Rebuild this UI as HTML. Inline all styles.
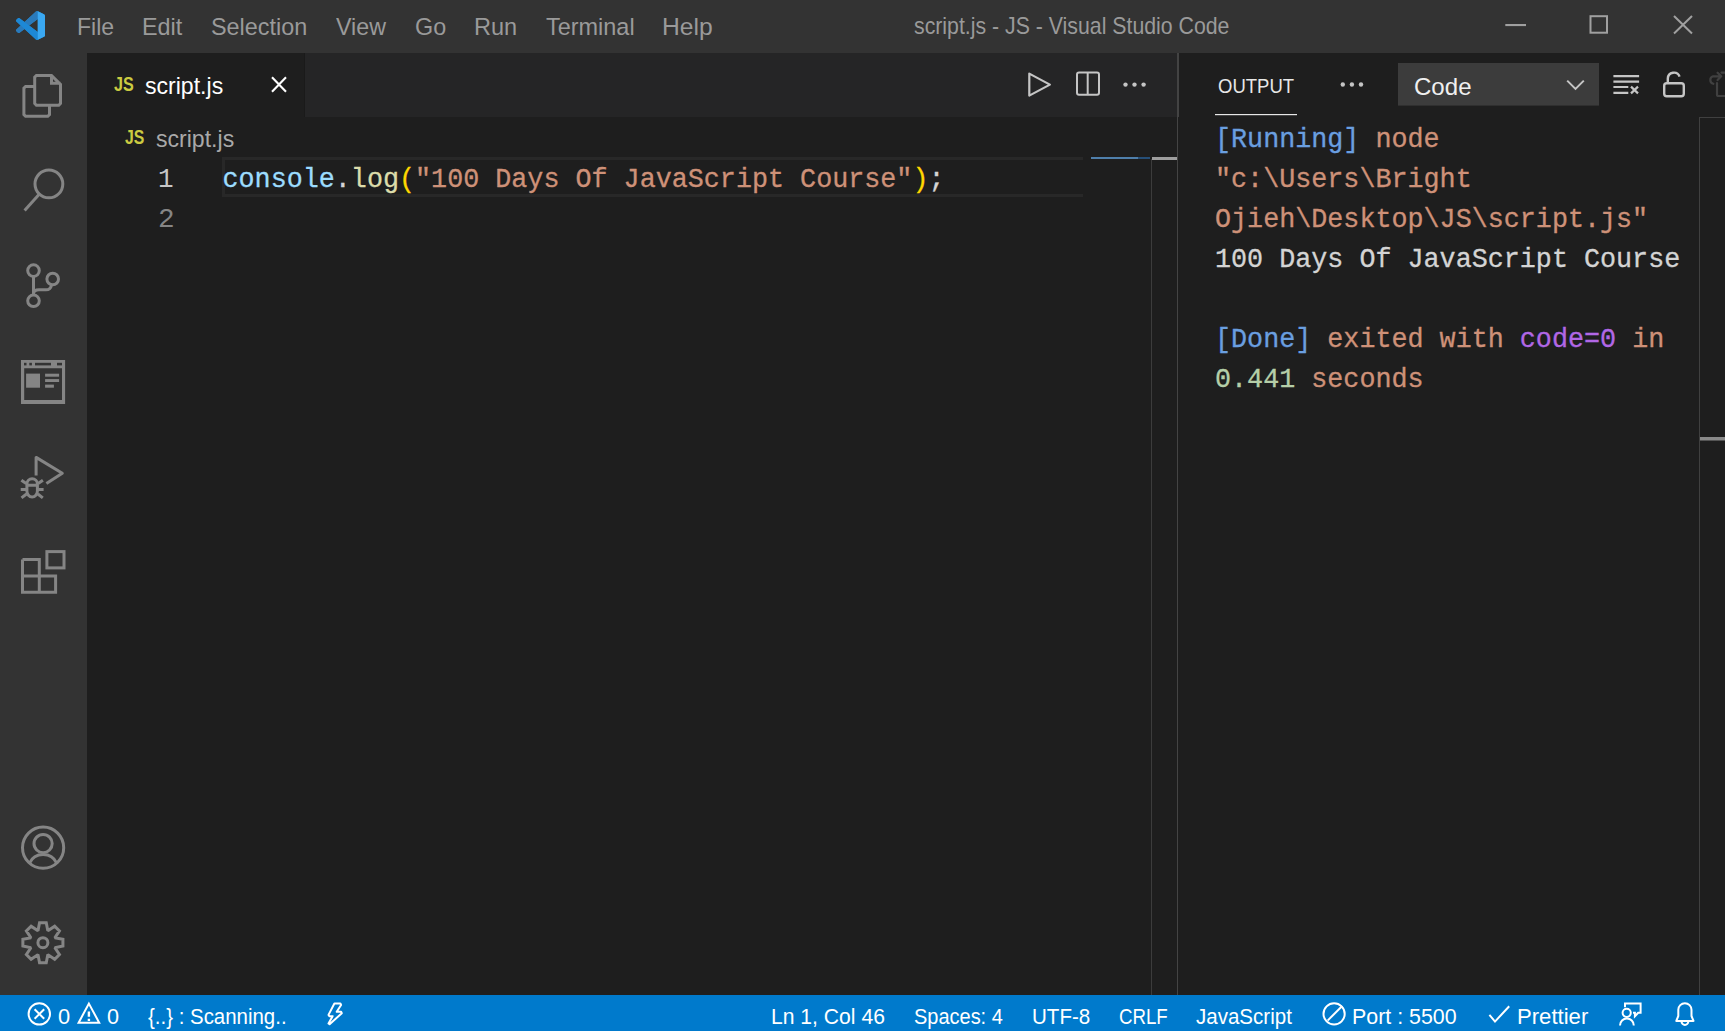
<!DOCTYPE html>
<html><head><meta charset="utf-8"><style>
html,body{margin:0;padding:0;}
body{width:1725px;height:1031px;overflow:hidden;position:relative;background:#1e1e1e;font-family:"Liberation Sans",sans-serif;}
.r{position:absolute;}
.t{position:absolute;white-space:pre;transform-origin:0 0;}
svg{position:absolute;left:0;top:0;}
</style></head><body>
<div class="r" style="left:0;top:0;width:1725px;height:53px;background:#333333"></div>
<div class="r" style="left:0;top:53px;width:87px;height:942px;background:#333333"></div>
<div class="r" style="left:87px;top:53px;width:1090px;height:64px;background:#252526"></div>
<div class="r" style="left:87px;top:53px;width:217px;height:64px;background:#1e1e1e"></div>
<div class="r" style="left:304px;top:53px;width:1px;height:64px;background:#1a1a1a"></div>
<div class="r" style="left:1177px;top:53px;width:1px;height:942px;background:#444444"></div>
<div class="r" style="left:0;top:995px;width:1725px;height:36px;background:#007acc"></div>
<svg width="1725" height="1031" viewBox="0 0 1725 1031"><g transform="translate(16,11) scale(0.29)">
<path fill="#1f8ad2" d="M96.46 10.8L75.86.87a6.23 6.23 0 0 0-7.1 1.2L29.35 38.04 12.19 25.01a4.16 4.16 0 0 0-5.32.24L1.36 30.26a4.16 4.16 0 0 0 0 6.16L16.24 50 1.36 63.58a4.16 4.16 0 0 0 0 6.16l5.51 5.010a4.16 4.16 0 0 0 5.32.24l17.16-13.03 39.41 35.96a6.22 6.22 0 0 0 7.1 1.2l20.6-9.92A6.25 6.25 0 0 0 100 83.58V16.42a6.25 6.25 0 0 0-3.54-5.62zM75.01 72.7L45.11 50l29.9-22.7v45.4z"/>
<path fill="#2a7abb" d="M68.76 2.07 L29.35 38.04 L16.24 50 L1.36 63.58 a4.16 4.16 0 0 0 0 6.16 l5.51 5.01 a4.16 4.16 0 0 0 5.32.24 L75.01 27.3 V1.2 Z"/>
<path fill="#1d88d6" d="M6.87 25.25 A4.16 4.16 0 0 1 12.19 25.01 L75.01 72.7 V99.4 L68.76 97.93 L29.35 61.96 L1.36 36.42 A4.16 4.16 0 0 1 1.36 30.26 Z"/>
<path fill="#3aa8f2" d="M75.01 0.6 L96.46 10.8 A6.25 6.25 0 0 1 100 16.42 V83.58 A6.25 6.25 0 0 1 96.46 89.2 L75.01 99.4 Z"/>
</g><path fill="none" stroke="#858585" stroke-width="3" stroke-linejoin="miter" d="M34.7 86.4 H25.6 L23.9 88.1 V114.6 L25.6 116.3 H47.8 L49.5 114.6 V105.2"/><path fill="none" stroke="#858585" stroke-width="3" d="M36.4 75.4 H51.5 L60.5 84.4 V103.5 L58.8 105.2 H36.4 L34.7 103.5 V77.1 Z M51.5 75.4 V83.3 H60.5"/><circle fill="none" stroke="#858585" stroke-width="3" cx="48.9" cy="183.9" r="13.9"/><path fill="none" stroke="#858585" stroke-width="3" d="M39.2 194.2 L24.6 210.6"/><circle fill="none" stroke="#858585" stroke-width="3" cx="33.5" cy="270.6" r="5.8"/><circle fill="none" stroke="#858585" stroke-width="3" cx="33.5" cy="300.8" r="5.8"/><circle fill="none" stroke="#858585" stroke-width="3" cx="52.7" cy="279" r="5.8"/><path fill="none" stroke="#858585" stroke-width="3" d="M33.5 276.4 V295 M33.5 294 C33.5 291 35.5 289.8 39 289.8 H46 C49 289.8 51 287.8 51.6 284.7"/><path fill="#858585" fill-rule="evenodd" d="M21 360 H65.1 V404 H21 Z M24.2 368.3 V400 H62 V368.3 Z"/><rect x="24" y="362.8" width="2.5" height="2.6" fill="#333333"/><rect x="29.3" y="362.8" width="2.6" height="2.6" fill="#333333"/><rect x="35" y="362.8" width="16.0" height="2.6" fill="#333333"/><rect x="57" y="362.8" width="5.0" height="2.6" fill="#333333"/><rect x="26.1" y="373.6" width="13.9" height="14.1" fill="#858585"/><rect x="45.1" y="373.7" width="14" height="3" fill="#858585"/><rect x="45.1" y="379.1" width="14" height="2.9" fill="#858585"/><rect x="45.1" y="384.6" width="8.8" height="3.1" fill="#858585"/><path fill="none" stroke="#858585" stroke-width="3" stroke-linejoin="round" d="M36.1 475.5 V457.4 L62.3 473.3 L46.4 483.6"/><path fill="none" stroke="#858585" stroke-width="3" stroke-width="2.7" d="M26.9 484 A5.25 5.25 0 0 1 37.4 484 V491 A5.25 6 0 0 1 26.9 491 Z M26.9 485.3 H37.4"/><path fill="none" stroke="#858585" stroke-width="3" stroke-width="2.7" d="M21.4 480.3 L26.2 483.6 M20.7 489.4 H26.2 M21.5 497.9 L26.5 494 M42.9 480.3 L38.1 483.6 M43.6 489.4 H38.1 M42.8 497.9 L37.8 494"/><path fill="none" stroke="#858585" stroke-width="3" d="M22.5 559.5 H39.3 V592.3 M22.5 576 H55.6 V592.3 H22.5 Z M22.5 559.5 V576"/><rect fill="none" stroke="#858585" stroke-width="3" x="46.9" y="551.6" width="17.1" height="16.3"/><circle fill="none" stroke="#858585" stroke-width="3" cx="43.1" cy="847.7" r="20.6"/><circle fill="none" stroke="#858585" stroke-width="3" cx="43.1" cy="843.6" r="9.1"/><path fill="none" stroke="#858585" stroke-width="3" d="M29.6 863 C32 857.5 37 854.4 43.1 854.4 C49.2 854.4 54.2 857.5 56.6 863"/><path fill="none" stroke="#858585" stroke-width="3" stroke-width="3.2" stroke-linejoin="miter" d="M38.14 929.96 L39.55 922.68 L46.25 922.68 L47.66 929.96 L48.54 930.32 L54.69 926.17 L59.43 930.91 L55.28 937.06 L55.64 937.94 L62.92 939.35 L62.92 946.05 L55.64 947.46 L55.28 948.34 L59.43 954.49 L54.69 959.23 L48.54 955.08 L47.66 955.44 L46.25 962.72 L39.55 962.72 L38.14 955.44 L37.26 955.08 L31.11 959.23 L26.37 954.49 L30.52 948.34 L30.16 947.46 L22.88 946.05 L22.88 939.35 L30.16 937.94 L30.52 937.06 L26.37 930.91 L31.11 926.17 L37.26 930.32 Z"/><circle fill="none" stroke="#858585" stroke-width="3" stroke-width="3.5" cx="42.9" cy="942.7" r="5"/><rect x="1505.3" y="24" width="20.7" height="2.1" fill="#a0a0a0"/><rect x="1590.5" y="16.2" width="16.5" height="16.5" fill="none" stroke="#a0a0a0" stroke-width="2"/><path fill="none" stroke="#a0a0a0" stroke-width="2" d="M1674 16 L1692 33.5 M1692 16 L1674 33.5"/><path fill="none" stroke="#ffffff" stroke-width="2.1" d="M272 77.2 L286 91.7 M286 77.2 L272 91.7"/><path fill="none" stroke="#c5c5c5" stroke-width="2.2" stroke-linejoin="round" d="M1029.3 73.6 L1049.9 84.6 L1029.3 95.6 Z"/><rect fill="none" stroke="#c5c5c5" stroke-width="2" x="1077" y="72.6" width="22" height="22.1" rx="2"/><path stroke="#c5c5c5" stroke-width="2" d="M1087.7 73 V94"/><circle fill="#c5c5c5" cx="1125.5" cy="84.6" r="2.2"/><circle fill="#c5c5c5" cx="1134.5" cy="84.6" r="2.2"/><circle fill="#c5c5c5" cx="1143.6" cy="84.6" r="2.2"/><path fill="#282828" d="M222 157 H1083 V160 H225 V194 H1083 V197 H222 Z"/><rect x="1177" y="53" width="2" height="64" fill="#434343"/><rect x="1091" y="157" width="59" height="2" fill="#264f78"/><rect x="1091" y="157" width="47" height="2" fill="#4f7fab"/><rect x="1151" y="159" width="1" height="836" fill="#3c3c3c"/><rect x="1152" y="157" width="25" height="3" fill="#9e9e9e"/><rect x="1215" y="114" width="82" height="1.2" fill="#e7e7e7"/><circle fill="#c5c5c5" cx="1342.8" cy="84.5" r="2.2"/><circle fill="#c5c5c5" cx="1351.9" cy="84.5" r="2.2"/><circle fill="#c5c5c5" cx="1361" cy="84.5" r="2.2"/><rect x="1398" y="63" width="201" height="42.6" fill="#3c3c3c"/><path fill="none" stroke="#c5c5c5" stroke-width="2" d="M1567.2 80.6 L1575.5 88.9 L1583.8 80.6"/><path fill="none" stroke="#c5c5c5" stroke-width="2.2" d="M1613.4 76.1 H1639.1 M1613.4 81.7 H1639.1 M1613.4 87 H1628.3 M1613.4 92.8 H1628.3 M1631 86.6 L1638 93.4 M1638 86.6 L1631 93.4"/><rect fill="none" stroke="#c5c5c5" stroke-width="2.4" x="1664.2" y="83.2" width="19.6" height="13" rx="2.5"/><path fill="none" stroke="#c5c5c5" stroke-width="2.4" d="M1667.8 83 V78.6 A6.1 6.1 0 0 1 1679.6 76.6"/><path fill="none" stroke="#404040" stroke-width="2.2" stroke-linecap="round" stroke-linejoin="round" d="M1713.3 83.8 A3.9 3.9 0 0 1 1713 76.3 H1721 M1717.6 72.7 L1721.2 76.3 L1717.6 80 M1721.5 72.6 H1726 M1717 83 V94.5 A1.5 1.5 0 0 0 1718.5 96 H1726"/><rect x="1699" y="117" width="1" height="878" fill="#404040"/><rect x="1699" y="117" width="26" height="1" fill="#404040"/><rect x="1700" y="437" width="25" height="3.5" fill="#8a8a8a"/><circle fill="none" stroke="#ffffff" stroke-width="2" cx="39.3" cy="1013.9" r="10.7"/><path fill="none" stroke="#ffffff" stroke-width="2" d="M34.6 1009.2 L44.2 1018.8 M44.2 1009.2 L34.6 1018.8"/><path fill="none" stroke="#ffffff" stroke-width="2" stroke-width="2.2" stroke-linejoin="miter" d="M88.9 1003.6 L99.2 1022.7 H78.6 Z"/><path stroke="#ffffff" stroke-width="2.4" d="M88.9 1011.4 V1016.8 M88.9 1018.7 V1020.9"/><path fill="none" stroke="#ffffff" stroke-width="2" stroke-width="1.9" stroke-linejoin="round" d="M334.4 1003.5 H340.4 L341.1 1005 L336.7 1011.8 H341.1 L341.8 1013.2 L329.6 1024.3 L328.5 1023.5 L332.6 1016.2 H329.4 L328.5 1014.9 Z"/><circle fill="none" stroke="#ffffff" stroke-width="2" cx="1334.1" cy="1013.9" r="10.6"/><path fill="none" stroke="#ffffff" stroke-width="2" d="M1327.6 1020.6 L1342.2 1006"/><path fill="none" stroke="#ffffff" stroke-width="2" stroke-width="2.2" d="M1489.4 1014.8 L1495 1021.6 L1509.2 1006.2"/><circle fill="none" stroke="#ffffff" stroke-width="2" cx="1626.7" cy="1012.8" r="4.1"/><path fill="none" stroke="#ffffff" stroke-width="2" d="M1620 1025.4 A6.9 6.9 0 0 1 1633.8 1025.4 M1625 1007.3 V1003.4 H1640.6 V1012.8 H1638.2 L1634.9 1016.3 V1012.8 H1633"/><path fill="none" stroke="#ffffff" stroke-width="2" stroke-linejoin="round" d="M1676.3 1020.9 L1678.3 1016 V1009.8 A6.6 6.6 0 0 1 1691.5 1009.8 V1016 L1693.5 1020.9 Z M1681.5 1021.5 A3.4 3.4 0 0 0 1688.3 1021.5"/></svg>
<div class="t" style="left:76.70px;top:15.36px;font-family:'Liberation Sans';font-weight:normal;font-size:24.5px;line-height:24.5px;color:#9a9a9a;transform:scale(0.9406,1.0000);">File</div><div class="t" style="left:141.88px;top:15.36px;font-family:'Liberation Sans';font-weight:normal;font-size:24.5px;line-height:24.5px;color:#9a9a9a;transform:scale(0.9533,1.0000);">Edit</div><div class="t" style="left:211.37px;top:15.36px;font-family:'Liberation Sans';font-weight:normal;font-size:24.5px;line-height:24.5px;color:#9a9a9a;transform:scale(0.9549,1.0000);">Selection</div><div class="t" style="left:336.40px;top:15.36px;font-family:'Liberation Sans';font-weight:normal;font-size:24.5px;line-height:24.5px;color:#9a9a9a;transform:scale(0.9479,1.0000);">View</div><div class="t" style="left:414.71px;top:15.36px;font-family:'Liberation Sans';font-weight:normal;font-size:24.5px;line-height:24.5px;color:#9a9a9a;transform:scale(0.9528,1.0000);">Go</div><div class="t" style="left:473.96px;top:15.36px;font-family:'Liberation Sans';font-weight:normal;font-size:24.5px;line-height:24.5px;color:#9a9a9a;transform:scale(0.9603,1.0000);">Run</div><div class="t" style="left:545.53px;top:15.36px;font-family:'Liberation Sans';font-weight:normal;font-size:24.5px;line-height:24.5px;color:#9a9a9a;transform:scale(0.9571,1.0000);">Terminal</div><div class="t" style="left:662.27px;top:15.36px;font-family:'Liberation Sans';font-weight:normal;font-size:24.5px;line-height:24.5px;color:#9a9a9a;transform:scale(1.0067,1.0000);">Help</div><div class="t" style="left:914.47px;top:14.08px;font-family:'Liberation Sans';font-weight:normal;font-size:24.0px;line-height:24.0px;color:#9a9a9a;transform:scale(0.8867,1.0000);">script.js - JS - Visual Studio Code</div><div class="t" style="left:145.44px;top:75.42px;font-family:'Liberation Sans';font-weight:normal;font-size:23.6px;line-height:23.6px;color:#ffffff;transform:scale(0.9775,1.0000);">script.js</div><div class="t" style="left:113.70px;top:74.59px;font-family:'Liberation Sans';font-weight:bold;font-size:19.5px;line-height:19.5px;color:#cbcb41;transform:scale(0.8270,1.0000);">JS</div><div class="t" style="left:124.90px;top:127.89px;font-family:'Liberation Sans';font-weight:bold;font-size:19.5px;line-height:19.5px;color:#cbcb41;transform:scale(0.8099,1.0000);">JS</div><div class="t" style="left:156.44px;top:128.02px;font-family:'Liberation Sans';font-weight:normal;font-size:23.6px;line-height:23.6px;color:#a9a9a9;transform:scale(0.9775,1.0000);">script.js</div><div class="t" style="left:158.38px;top:165.69px;font-family:'Liberation Mono';font-weight:normal;font-size:26.75px;line-height:26.75px;color:#c6c6c6;transform:scale(0.9720,1.0400);">1</div><div class="t" style="left:158.27px;top:205.69px;font-family:'Liberation Mono';font-weight:normal;font-size:26.75px;line-height:26.75px;color:#858585;transform:scale(1.0368,1.0400);">2</div><div class="t" style="left:1217.73px;top:76.24px;font-family:'Liberation Sans';font-weight:normal;font-size:20.5px;line-height:20.5px;color:#e7e7e7;transform:scale(0.9028,1.0000);">OUTPUT</div><div class="t" style="left:1413.87px;top:74.86px;font-family:'Liberation Sans';font-weight:normal;font-size:24.5px;line-height:24.5px;color:#f0f0f0;transform:scale(0.9818,1.0000);">Code</div><div class="t" style="left:57.72px;top:1005.77px;font-family:'Liberation Sans';font-weight:normal;font-size:22.0px;line-height:22.0px;color:#ffffff;transform:scale(0.9909,1.0000);">0</div><div class="t" style="left:107.03px;top:1005.77px;font-family:'Liberation Sans';font-weight:normal;font-size:22.0px;line-height:22.0px;color:#ffffff;transform:scale(0.9818,1.0000);">0</div><div class="t" style="left:148.48px;top:1005.77px;font-family:'Liberation Sans';font-weight:normal;font-size:22.0px;line-height:22.0px;color:#ffffff;transform:scale(0.9286,1.0000);">{..} : Scanning..</div><div class="t" style="left:771.15px;top:1005.77px;font-family:'Liberation Sans';font-weight:normal;font-size:22.0px;line-height:22.0px;color:#ffffff;transform:scale(0.9601,1.0000);">Ln 1, Col 46</div><div class="t" style="left:914.08px;top:1005.77px;font-family:'Liberation Sans';font-weight:normal;font-size:22.0px;line-height:22.0px;color:#ffffff;transform:scale(0.9078,1.0000);">Spaces: 4</div><div class="t" style="left:1031.72px;top:1005.77px;font-family:'Liberation Sans';font-weight:normal;font-size:22.0px;line-height:22.0px;color:#ffffff;transform:scale(0.9341,1.0000);">UTF-8</div><div class="t" style="left:1118.82px;top:1005.77px;font-family:'Liberation Sans';font-weight:normal;font-size:22.0px;line-height:22.0px;color:#ffffff;transform:scale(0.8492,1.0000);">CRLF</div><div class="t" style="left:1196.28px;top:1005.77px;font-family:'Liberation Sans';font-weight:normal;font-size:22.0px;line-height:22.0px;color:#ffffff;transform:scale(0.9333,1.0000);">JavaScript</div><div class="t" style="left:1351.63px;top:1005.77px;font-family:'Liberation Sans';font-weight:normal;font-size:22.0px;line-height:22.0px;color:#ffffff;transform:scale(0.9719,1.0000);">Port : 5500</div><div class="t" style="left:1516.77px;top:1005.77px;font-family:'Liberation Sans';font-weight:normal;font-size:22.0px;line-height:22.0px;color:#ffffff;transform:scale(1.0046,1.0000);">Prettier</div><div class="t" style="left:222.50px;top:165.90px;font-family:'Liberation Mono';font-size:26.746px;line-height:26.746px;transform:scale(1,1.03);-webkit-text-stroke:0.3px currentColor;"><span style="color:#9cdcfe">console</span><span style="color:#d4d4d4">.</span><span style="color:#dcdcaa">log</span><span style="color:#ffd700">(</span><span style="color:#ce9178">"100 Days Of JavaScript Course"</span><span style="color:#ffd700">)</span><span style="color:#d4d4d4">;</span></div><div class="t" style="left:1215.00px;top:125.90px;font-family:'Liberation Mono';font-size:26.746px;line-height:26.746px;transform:scale(1,1.03);-webkit-text-stroke:0.3px currentColor;"><span style="color:#6a9fe0">[Running]</span><span style="color:#ce9178"> node</span></div><div class="t" style="left:1215.00px;top:165.90px;font-family:'Liberation Mono';font-size:26.746px;line-height:26.746px;transform:scale(1,1.03);-webkit-text-stroke:0.3px currentColor;"><span style="color:#ce9178">"c:\Users\Bright</span></div><div class="t" style="left:1215.00px;top:205.90px;font-family:'Liberation Mono';font-size:26.746px;line-height:26.746px;transform:scale(1,1.03);-webkit-text-stroke:0.3px currentColor;"><span style="color:#ce9178">Ojieh\Desktop\JS\script.js"</span></div><div class="t" style="left:1215.00px;top:245.90px;font-family:'Liberation Mono';font-size:26.746px;line-height:26.746px;transform:scale(1,1.03);-webkit-text-stroke:0.3px currentColor;"><span style="color:#d4d4d4">100 Days Of JavaScript Course</span></div><div class="t" style="left:1215.00px;top:325.90px;font-family:'Liberation Mono';font-size:26.746px;line-height:26.746px;transform:scale(1,1.03);-webkit-text-stroke:0.3px currentColor;"><span style="color:#6a9fe0">[Done]</span><span style="color:#ce9178"> exited with </span><span style="color:#b267e6">code=0</span><span style="color:#ce9178"> in</span></div><div class="t" style="left:1215.00px;top:365.90px;font-family:'Liberation Mono';font-size:26.746px;line-height:26.746px;transform:scale(1,1.03);-webkit-text-stroke:0.3px currentColor;"><span style="color:#b5cea8">0.441</span><span style="color:#ce9178"> seconds</span></div>
</body></html>
